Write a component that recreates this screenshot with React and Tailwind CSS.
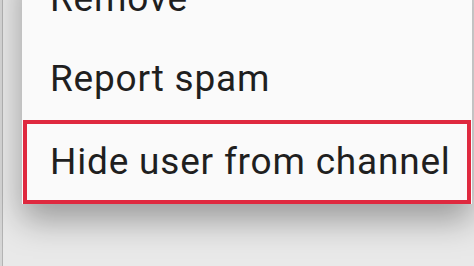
export default function App() {
  return (
    <div className="flex h-[266px] w-[474px] overflow-hidden bg-[#e9e9e9] font-['Roboto',sans-serif] text-[#1f1f1f]">
      {/* screen edge on the left */}
      <div className="w-[2px] shrink-0 bg-[#d6d6d6]" />
      <div className="w-px shrink-0 bg-[#b4b4b4]" />
      <div className="flex-1 pl-[19px] pr-[2px]">
        {/* popup menu, scrolled so the first item is cut off */}
        <div className="-mt-[40px] bg-[#fafafa] shadow-[0_16px_32px_rgba(0,0,0,0.34)]">
          <div className="h-[78px] pl-[28px] text-[37px] leading-[78px] tracking-[0.8px] whitespace-nowrap">Remove</div>
          <div className="h-[82px] pl-[28px] text-[37px] leading-[82px] tracking-[0.8px] whitespace-nowrap">Report spam</div>
          <div className="mx-px h-[84px] border-4 border-[#df293f] pl-[23px] text-[37px] leading-[76px] tracking-[0.8px] whitespace-nowrap">
            Hide user from channel
          </div>
        </div>
      </div>
    </div>
  );
}
